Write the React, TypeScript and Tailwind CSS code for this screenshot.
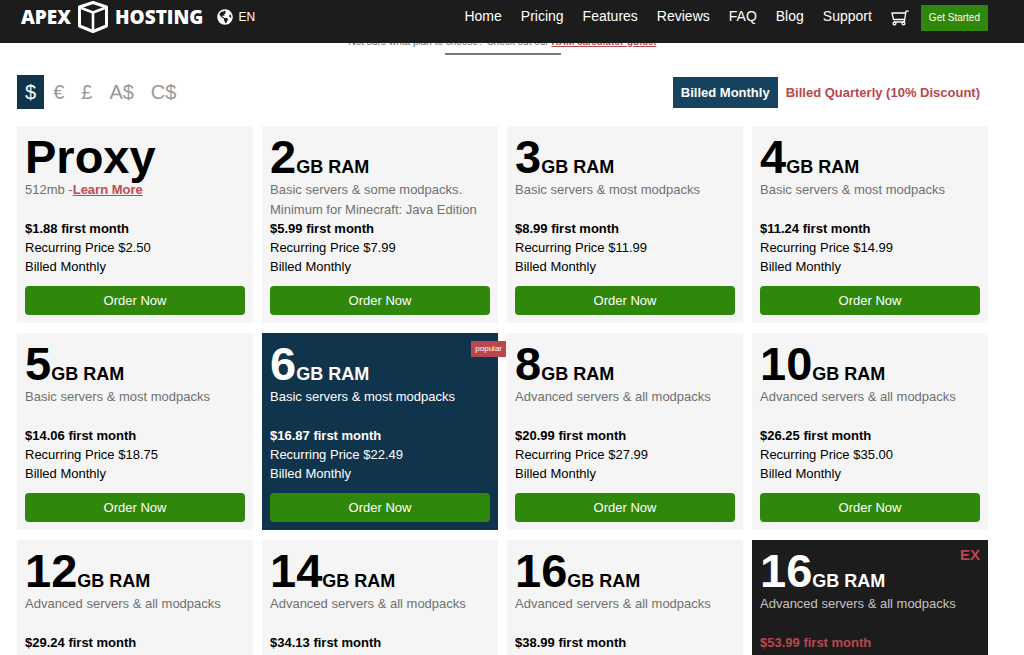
import React, { useState } from 'react';
import { FaGlobeAmericas } from 'react-icons/fa';

type Plan = {
  amount: string;
  unit?: string;
  description: string;
  learnMore?: boolean;
  firstMonth: string;
  recurring: string;
  variant?: 'popular' | 'ex';
};

const NAV_LINKS = ['Home', 'Pricing', 'Features', 'Reviews', 'FAQ', 'Blog', 'Support'];

const CURRENCIES = ['$', '€', '£', 'A$', 'C$'];

const BILLING_CYCLES = ['Billed Monthly', 'Billed Quarterly (10% Discount)'];

const PLANS: Plan[] = [
  { amount: 'Proxy', description: '512mb -', learnMore: true, firstMonth: '$1.88', recurring: '$2.50' },
  { amount: '2', unit: 'GB RAM', description: 'Basic servers & some modpacks. Minimum for Minecraft: Java Edition', firstMonth: '$5.99', recurring: '$7.99' },
  { amount: '3', unit: 'GB RAM', description: 'Basic servers & most modpacks', firstMonth: '$8.99', recurring: '$11.99' },
  { amount: '4', unit: 'GB RAM', description: 'Basic servers & most modpacks', firstMonth: '$11.24', recurring: '$14.99' },
  { amount: '5', unit: 'GB RAM', description: 'Basic servers & most modpacks', firstMonth: '$14.06', recurring: '$18.75' },
  { amount: '6', unit: 'GB RAM', description: 'Basic servers & most modpacks', firstMonth: '$16.87', recurring: '$22.49', variant: 'popular' },
  { amount: '8', unit: 'GB RAM', description: 'Advanced servers & all modpacks', firstMonth: '$20.99', recurring: '$27.99' },
  { amount: '10', unit: 'GB RAM', description: 'Advanced servers & all modpacks', firstMonth: '$26.25', recurring: '$35.00' },
  { amount: '12', unit: 'GB RAM', description: 'Advanced servers & all modpacks', firstMonth: '$29.24', recurring: '$38.99' },
  { amount: '14', unit: 'GB RAM', description: 'Advanced servers & all modpacks', firstMonth: '$34.13', recurring: '$45.50' },
  { amount: '16', unit: 'GB RAM', description: 'Advanced servers & all modpacks', firstMonth: '$38.99', recurring: '$51.99' },
  { amount: '16', unit: 'GB RAM', description: 'Advanced servers & all modpacks', firstMonth: '$53.99', recurring: '$71.99', variant: 'ex' },
];

// --- Header ---

const Logo: React.FC = () => (
  <a href="#" aria-label="Apex Hosting" className="flex items-center gap-1.5 font-['Open_Sans'] text-[19px] font-extrabold leading-8">
    <span>APEX</span>
    <svg viewBox="0 0 32 34" className="h-[34px] w-8" fill="none" stroke="currentColor" strokeWidth="3" strokeLinejoin="round">
      <path d="M16 2.5 29.5 7v19L16 31.500 2.500 26V7z" />
      <path d="M3 7.500 16 12.500 29 7.500M16 12.500V31" strokeWidth="2.600" />
    </svg>
    <span>HOSTING</span>
  </a>
);

const CartIcon: React.FC = () => (
  <svg viewBox="0 0 18 16" className="h-4 w-[18px]" fill="none" stroke="currentColor" strokeWidth="1.3" strokeLinecap="round" strokeLinejoin="round">
    <path d="M17.300 1.200h-2.300l-1.300 8.300H2.500L1 3h13.500M13.700 9.500l-.5 2.500H3.200" />
    <circle cx="3.500" cy="13.500" r="1.400" />
    <circle cx="12.500" cy="13.500" r="1.400" />
  </svg>
);

const Header: React.FC = () => (
  <header className="fixed inset-x-0 top-0 z-10 flex h-[43px] items-start justify-between bg-[#1c1c1c] pl-[21px] pr-9 text-white">
    <div className="flex h-[34px] items-center gap-[14px]">
      <Logo />
      <button type="button" className="flex items-center gap-[5px] text-[12px]">
        <FaGlobeAmericas className="size-4" />
        EN
      </button>
    </div>
    <nav className="flex h-9 items-center gap-[19px] text-[14px]">
      {NAV_LINKS.map((link) => (
        <a key={link} href="#" className="pb-1">{link}</a>
      ))}
      <div className="flex items-center gap-3">
        <a href="#" aria-label="Cart"><CartIcon /></a>
        <a href="#" className="bg-[#2f870b] px-2 text-[10px] leading-[26px]">Get Started</a>
      </div>
    </nav>
  </header>
);

// --- Plan card ---

const CARD_STYLES = {
  default: { card: 'bg-[#f5f5f5] text-black', description: 'text-[#707070]', price: '' },
  popular: { card: 'bg-[#11344d] text-white', description: 'text-white', price: '' },
  ex: { card: 'bg-[#1c1c1c] text-white', description: 'text-[#c4c4c4]', price: 'text-[#b9474d]' },
};

const PlanCard: React.FC<{ plan: Plan }> = ({ plan }) => {
  const styles = CARD_STYLES[plan.variant ?? 'default'];

  return (
    <article className={`relative flex flex-col p-2 ${styles.card}`}>
      {plan.variant === 'popular' && (
        <span className="absolute -right-2 top-2 bg-[#b9474d] px-1 text-[8px] leading-4 text-white">popular</span>
      )}
      {plan.variant === 'ex' && (
        <span className="absolute right-2 top-1 text-[15px] font-bold text-[#b9474d]">EX</span>
      )}
      <h2 className="text-[47px] font-bold leading-[46px]">
        {plan.amount}
        {plan.unit && <span className="text-[18px] leading-none">{plan.unit}</span>}
      </h2>
      <p className={`h-[39px] leading-5 ${styles.description}`}>
        {plan.description}
        {plan.learnMore && <a href="#" className="font-bold text-[#c2494f] underline">Learn More</a>}
      </p>
      <div className="leading-[19px]">
        <p className={`font-bold ${styles.price}`}>{plan.firstMonth} first month</p>
        <p>Recurring Price {plan.recurring}</p>
        <p>Billed Monthly</p>
      </div>
      <button type="button" className="mt-[10px] rounded-sm bg-[#2f870b] leading-[29px] text-white">Order Now</button>
    </article>
  );
};

// --- Page ---

export default function App() {
  const [currency, setCurrency] = useState('$');
  const [billing, setBilling] = useState('Billed Monthly');

  return (
    <div className="h-screen overflow-hidden bg-white font-['Liberation_Sans',Arial,sans-serif] text-[13px]">
      <Header />
      <main className="pl-[17px] pr-9 pt-9">
        <div className="flex flex-col items-center">
          <p className="text-[10px] leading-3 text-[#707070]">
            Not sure what plan to choose? Check out our{' '}
            <a href="#" className="font-bold text-[#b9474d] underline">RAM calculator guide.</a>
          </p>
          <hr className="mt-[5px] w-[116px] border-t-2 border-[#777777]" />
        </div>

        <div className="mt-5 flex items-center justify-between">
          <div className="flex gap-px text-[20px] leading-[34px]">
            {CURRENCIES.map((item) => (
              <button
                key={item}
                type="button"
                onClick={() => setCurrency(item)}
                className={`px-2 ${item === currency ? 'bg-[#11344d] text-white' : 'text-[#999999]'}`}
              >
                {item}
              </button>
            ))}
          </div>
          <div className="flex font-bold leading-[31px]">
            {BILLING_CYCLES.map((cycle) => (
              <button
                key={cycle}
                type="button"
                onClick={() => setBilling(cycle)}
                className={`px-2 ${cycle === billing ? 'bg-[#154360] text-white' : 'text-[#b9474d]'}`}
              >
                {cycle}
              </button>
            ))}
          </div>
        </div>

        <div className="mt-[17px] grid grid-cols-4 gap-x-[9px] gap-y-[10px]">
          {PLANS.map((plan, index) => (
            <PlanCard key={index} plan={plan} />
          ))}
        </div>
      </main>
    </div>
  );
}
